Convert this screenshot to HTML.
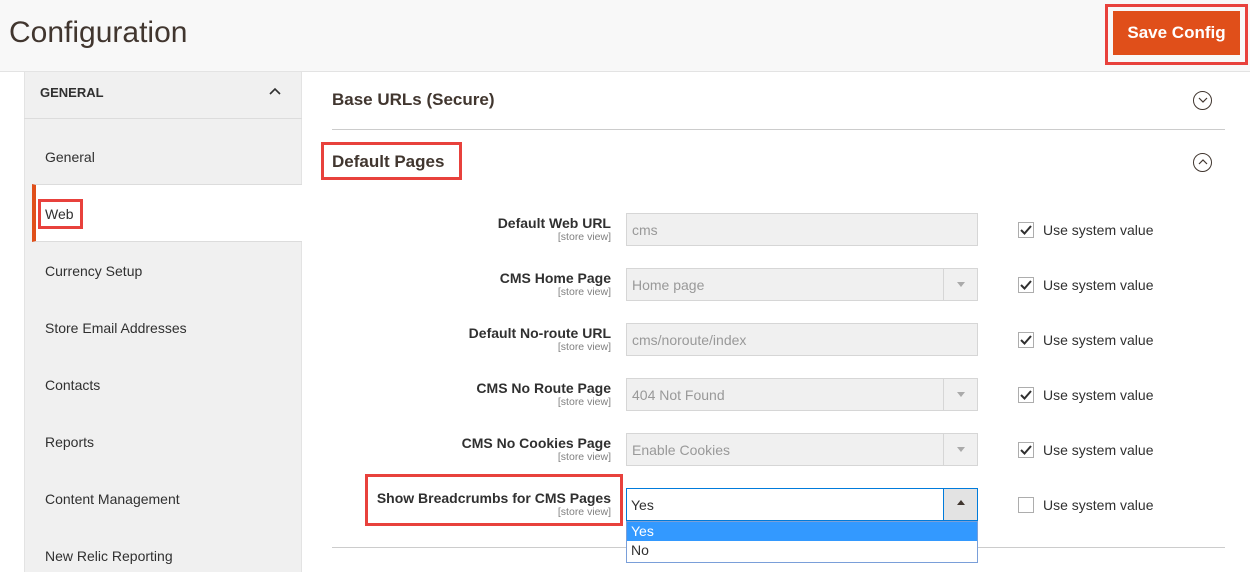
<!DOCTYPE html>
<html><head><style>
*{box-sizing:border-box;margin:0;padding:0}
body{width:1250px;height:570px;overflow:hidden;background:#fff;font-family:"Liberation Sans",sans-serif;color:#303030;position:relative}
.a{position:absolute}
.hdr{left:0;top:0;width:1250px;height:72px;background:#f8f8f8;border-bottom:1px solid #e3e3e3}
.red{border:3px solid #e8413c}
.side{left:24px;top:72px;width:278px;height:500px;background:#f0f0f0;border-left:1px solid #e3e3e3;border-right:1px solid #e3e3e3}
.nav{left:45px;font-size:14px;color:#303030}
.lbl{right:639px;text-align:right;font-size:14px;font-weight:bold;color:#303030;line-height:16px}
.lbl small{display:block;font-size:10.5px;font-weight:normal;color:#808080;line-height:13px}
.inp{left:626px;width:352px;height:33px;background:#f0f0f0;border:1px solid #d6d6d6;color:#999;font-size:14px;padding:8px 0 0 5px}
.arr{position:absolute;right:0;top:0;width:34px;height:31px;border-left:1px solid #d6d6d6}
.arr:after{content:"";position:absolute;left:13px;top:13px;border:4px solid transparent;border-top:5px solid #aaa}
.cb{left:1018px;width:16px;height:16px;border:1px solid #adadad;background:#fff}
.cbt{left:1043px;font-size:14px;color:#303030}
.circ{width:19px;height:19px;border:1px solid #41362f;border-radius:50%}
</style></head><body>
<div class="a hdr"></div>
<div class="a" style="left:9px;top:16px;font-size:30px;color:#41362f">Configuration</div>
<div class="a red" style="left:1105px;top:4px;width:143px;height:61px"></div>
<div class="a" style="left:1113px;top:11px;width:127px;height:44px;background:#e04f1a;color:#fff;font-weight:bold;font-size:17px;text-align:center;line-height:44px">Save Config</div>

<div class="a side"></div>
<div class="a" style="left:24px;top:118px;width:278px;border-top:1px solid #dcdcdc"></div>
<div class="a" style="left:40px;top:85px;font-size:13px;font-weight:bold;color:#303030">GENERAL</div>
<svg class="a" style="left:268px;top:86px" width="14" height="10"><path d="M2 8 L7 3 L12 8" fill="none" stroke="#303030" stroke-width="1.6"/></svg>
<div class="a nav" style="top:149px">General</div>
<div class="a" style="left:32px;top:184px;width:270px;height:58px;background:#fff;border-top:1px solid #dcdcdc;border-bottom:1px solid #dcdcdc;border-left:4px solid #e04f1a"></div>
<div class="a red" style="left:38px;top:199px;width:45px;height:30px"></div>
<div class="a nav" style="top:206px">Web</div>
<div class="a nav" style="top:263px">Currency Setup</div>
<div class="a nav" style="top:320px">Store Email Addresses</div>
<div class="a nav" style="top:377px">Contacts</div>
<div class="a nav" style="top:434px">Reports</div>
<div class="a nav" style="top:491px">Content Management</div>
<div class="a nav" style="top:548px">New Relic Reporting</div>

<div class="a" style="left:332px;top:90px;font-size:17px;font-weight:bold;color:#41362f">Base URLs (Secure)</div>
<div class="a circ" style="left:1193px;top:91px"></div>
<svg class="a" style="left:1197px;top:96px" width="12" height="8"><path d="M2 2 L6 6 L10 2" fill="none" stroke="#41362f" stroke-width="1.2"/></svg>
<div class="a" style="left:332px;top:129px;width:893px;border-top:1px solid #ccc"></div>
<div class="a red" style="left:321px;top:142px;width:141px;height:38px"></div>
<div class="a" style="left:332px;top:152px;font-size:17px;font-weight:bold;color:#41362f">Default Pages</div>
<div class="a circ" style="left:1193px;top:153px"></div>
<svg class="a" style="left:1197px;top:158px" width="12" height="8"><path d="M2 6 L6 2 L10 6" fill="none" stroke="#41362f" stroke-width="1.2"/></svg>

<div class="a lbl" style="top:215px">Default Web URL<small>[store view]</small></div>
<div class="a inp" style="top:213px">cms</div>
<div class="a lbl" style="top:270px">CMS Home Page<small>[store view]</small></div>
<div class="a inp" style="top:268px">Home page<div class="arr"></div></div>
<div class="a lbl" style="top:325px">Default No-route URL<small>[store view]</small></div>
<div class="a inp" style="top:323px">cms/noroute/index</div>
<div class="a lbl" style="top:380px">CMS No Route Page<small>[store view]</small></div>
<div class="a inp" style="top:378px">404 Not Found<div class="arr"></div></div>
<div class="a lbl" style="top:435px">CMS No Cookies Page<small>[store view]</small></div>
<div class="a inp" style="top:433px">Enable Cookies<div class="arr"></div></div>
<div class="a red" style="left:365px;top:474px;width:258px;height:52px"></div>
<div class="a lbl" style="top:490px">Show Breadcrumbs for CMS Pages<small>[store view]</small></div>
<div class="a" style="left:626px;top:488px;width:352px;height:33px;border:1px solid #007bdb;background:#fff;font-size:14px;color:#303030;padding:8px 0 0 4px">Yes<div style="position:absolute;right:0;top:0;width:34px;height:31px;background:#e3e3e3;border-left:1px solid #007bdb"><div style="position:absolute;left:13px;top:11px;border:4px solid transparent;border-bottom:5px solid #41362f;border-top:0"></div></div></div>
<div class="a" style="left:626px;top:521px;width:352px;height:42px;border:1px solid #7a9fd9;background:#fff;font-size:14px">
<div style="background:#3399ff;color:#fff;height:19px;padding:1px 0 0 4px">Yes</div>
<div style="padding:1px 0 0 4px;color:#303030">No</div></div>

<div class="a" style="left:332px;top:547px;width:294px;border-top:1px solid #ccc"></div>
<div class="a" style="left:978px;top:547px;width:247px;border-top:1px solid #ccc"></div>

<div class="a cb" style="top:222px"></div><div class="a cbt" style="top:222px">Use system value</div>
<div class="a cb" style="top:277px"></div><div class="a cbt" style="top:277px">Use system value</div>
<div class="a cb" style="top:332px"></div><div class="a cbt" style="top:332px">Use system value</div>
<div class="a cb" style="top:387px"></div><div class="a cbt" style="top:387px">Use system value</div>
<div class="a cb" style="top:442px"></div><div class="a cbt" style="top:442px">Use system value</div>
<div class="a cb" style="top:497px"></div><div class="a cbt" style="top:497px">Use system value</div>
<svg class="a" style="left:1018px;top:222px" width="16" height="240"><g fill="none" stroke="#303030" stroke-width="2"><path d="M3 8 L6.5 11.5 L13 4"/><path d="M3 63 L6.5 66.5 L13 59"/><path d="M3 118 L6.5 121.5 L13 114"/><path d="M3 173 L6.5 176.5 L13 169"/><path d="M3 228 L6.5 231.5 L13 224"/></g></svg>
</body></html>
